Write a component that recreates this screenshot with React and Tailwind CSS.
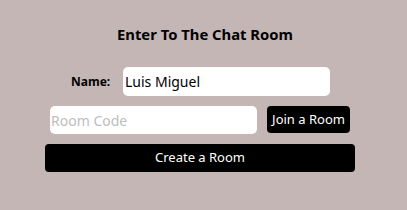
export default function App() {
  return (
    <div className="w-[407px] h-[210px] bg-[#c3b6b5] flex flex-col" style={{ fontFamily: '"Noto Sans", sans-serif' }}>
      <h1 className="mt-[24px] ml-[3px] text-center text-[14.8px] leading-[20px] font-bold text-black">Enter To The Chat Room</h1>
      <div className="mt-[23px] flex items-center">
        <label className="ml-[71px] w-[52px] text-[12px] font-bold text-black">Name:</label>
        <input
          className="w-[207px] h-[29px] rounded-[5px] bg-white px-[2px] text-[14px] text-black outline-none"
          defaultValue="Luis Miguel"
        />
      </div>
      <div className="mt-[10px] flex items-start">
        <input
          className="ml-[50px] w-[207px] h-[28px] rounded-[5px] bg-white px-[1px] text-[14px] text-black outline-none placeholder:text-[#bdbdbd]"
          placeholder="Room Code"
        />
        <button className="ml-[10px] w-[83px] h-[27px] rounded-[4px] bg-black text-white text-[13px] whitespace-nowrap">Join a Room</button>
      </div>
      <button className="mt-[10px] ml-[45px] w-[310px] h-[28px] rounded-[4px] bg-black text-white text-[13px]">Create a Room</button>
    </div>
  );
}
